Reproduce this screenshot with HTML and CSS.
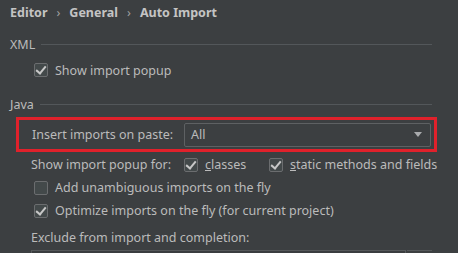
FILE: index.html
```html
<!DOCTYPE html>
<html>
<head>
<meta charset="utf-8">
<link rel="stylesheet" href="styles.css">
</head>
<body>
<div class="page">
  <div class="crumbs">
    <span>Editor</span><span class="sep">›</span><span>General</span><span class="sep">›</span><span>Auto Import</span>
  </div>
  <div class="group-title"><span>XML</span><div class="line"></div></div>
  <div class="row indent first"><span class="cb checked"></span><span>Show import popup</span></div>
  <div class="group-title java"><span>Java</span><div class="line"></div></div>
  <div class="highlight">
    <span class="label">Insert imports on paste:</span>
    <div class="select"><span>All</span><span class="arrow"></span></div>
  </div>
  <div class="row popup-for">
    <span class="label">Show import popup for:</span>
    <span class="cb checked"></span><span class="opt"><u>c</u>lasses</span>
    <span class="cb checked"></span><span><u>s</u>tatic methods and fields</span>
  </div>
  <div class="row indent"><span class="cb"></span><span>Add unambiguous imports on the fly</span></div>
  <div class="row indent"><span class="cb checked"></span><span>Optimize imports on the fly (for current project)</span></div>
  <div class="row exclude"><span>Exclude from import and completion:</span></div>
  <div class="table-row"><div class="table"></div><div class="table-side"></div></div>
</div>
</body>
</html>
```
FILE: styles.css
```css
html, body {
  margin: 0;
  padding: 0;
  background: #3c3f41;
  overflow: hidden;
}
.page {
  width: 458px;
  height: 253px;
  overflow: hidden;
  font-family: "Noto Sans", "Open Sans", sans-serif;
  font-size: 12.5px;
  color: #bbbbbb;
  box-sizing: border-box;
}
.crumbs {
  height: 24px;
  display: flex;
  align-items: center;
  padding-left: 10px;
  font-weight: bold;
  font-size: 12.5px;
  color: #c4c4c4;
}
.crumbs .sep {
  font-weight: normal;
  margin: 0 9px;
  color: #a0a0a0;
}
.group-title {
  margin-top: 10px;
  height: 20px;
  display: flex;
  align-items: center;
  padding-left: 10px;
  padding-right: 26px;
}
.group-title .line {
  flex: 1;
  height: 1px;
  background: #53575a;
  margin-left: 6px;
}
.group-title.java {
  margin-top: 12px;
}
.row {
  height: 23px;
  display: flex;
  align-items: center;
}
.row.first {
  margin-top: 4px;
  height: 24px;
}
.indent {
  padding-left: 34px;
}
.cb {
  width: 12px;
  height: 12px;
  border: 1px solid #6b6d6f;
  border-radius: 2px;
  background: #43494a;
  margin-right: 7px;
  position: relative;
  flex: none;
}
.cb.checked::after {
  content: "";
  position: absolute;
  left: 3px;
  top: 0px;
  width: 4px;
  height: 8px;
  border-right: 2px solid #c8c8c8;
  border-bottom: 2px solid #c8c8c8;
  transform: rotate(40deg);
}
.highlight {
  margin: 3px 21px 0 16px;
  height: 35px;
  box-sizing: border-box;
  border: 3px solid #e0212b;
  display: flex;
  align-items: center;
  padding-left: 13px;
  padding-right: 3px;
}
.highlight .label {
  width: 152px;
}
.select {
  flex: 1;
  height: 24px;
  box-sizing: border-box;
  border: 1px solid #5e6163;
  border-radius: 2px;
  display: flex;
  align-items: center;
  justify-content: space-between;
  padding: 0 8px 0 6px;
}
.arrow {
  width: 0;
  height: 0;
  border-left: 4px solid transparent;
  border-right: 4px solid transparent;
  border-top: 5px solid #a9abad;
}
.popup-for {
  padding-left: 31px;
  margin-top: 1px;
}
.popup-for .label {
  width: 153px;
}
.popup-for .opt {
  width: 64px;
}
.exclude {
  padding-left: 31px;
  height: 26px;
  margin-top: 2px;
}
.table-row {
  display: flex;
  padding-left: 31px;
  gap: 1px;
  height: 3px;
  overflow: hidden;
}
.table {
  width: 375px;
  height: 3px;
  box-sizing: border-box;
  border-top: 1px solid #55585a;
  border-left: 1px solid #55585a;
  border-right: 1px solid #55585a;
  background: #3a3d3f;
}
.table-side {
  width: 25px;
  height: 3px;
  box-sizing: border-box;
  border-top: 1px solid #55585a;
}
```
